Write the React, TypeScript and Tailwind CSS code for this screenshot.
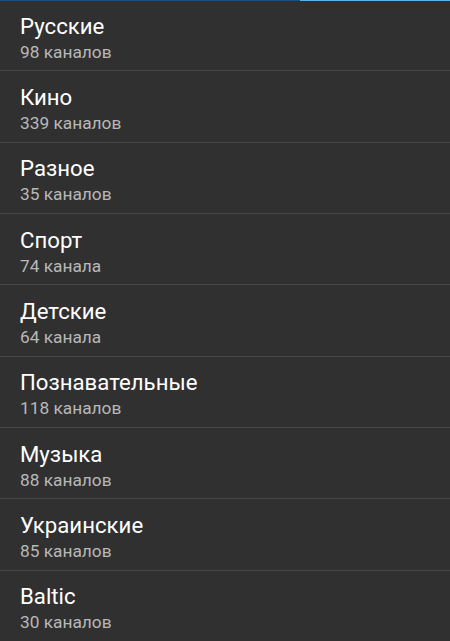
import React from 'react';

type Group = {
  title: string;
  count: string;
};

const groups: Group[] = [
  { title: 'Русские', count: '98 каналов' },
  { title: 'Кино', count: '339 каналов' },
  { title: 'Разное', count: '35 каналов' },
  { title: 'Спорт', count: '74 канала' },
  { title: 'Детские', count: '64 канала' },
  { title: 'Познавательные', count: '118 каналов' },
  { title: 'Музыка', count: '88 каналов' },
  { title: 'Украинские', count: '85 каналов' },
  { title: 'Baltic', count: '30 каналов' },
];

export default function App() {
  return (
    <div
      className="relative w-[450px] h-[641px] overflow-hidden bg-[#303030]"
      style={{ fontFamily: 'Roboto, "Noto Sans", sans-serif' }}
    >
      {/* loading bar */}
      <div className="absolute left-0 right-0 top-0 flex h-px">
        <div className="w-[300px] bg-[#1d4f80]" />
        <div className="flex-1 bg-[#5fb0e6]" />
      </div>

      <div className="flex flex-col">
        {groups.map((g) => (
          <div
            key={g.title}
            className="box-border h-[71.33px] shrink-0 border-b border-[#474747] px-5 pt-[11.8px]"
          >
            <div className="text-[22.2px] leading-[28px] text-white">{g.title}</div>
            <div className="text-[17.3px] leading-[24px] text-[#b8b8b8]">{g.count}</div>
          </div>
        ))}
      </div>
    </div>
  );
}
